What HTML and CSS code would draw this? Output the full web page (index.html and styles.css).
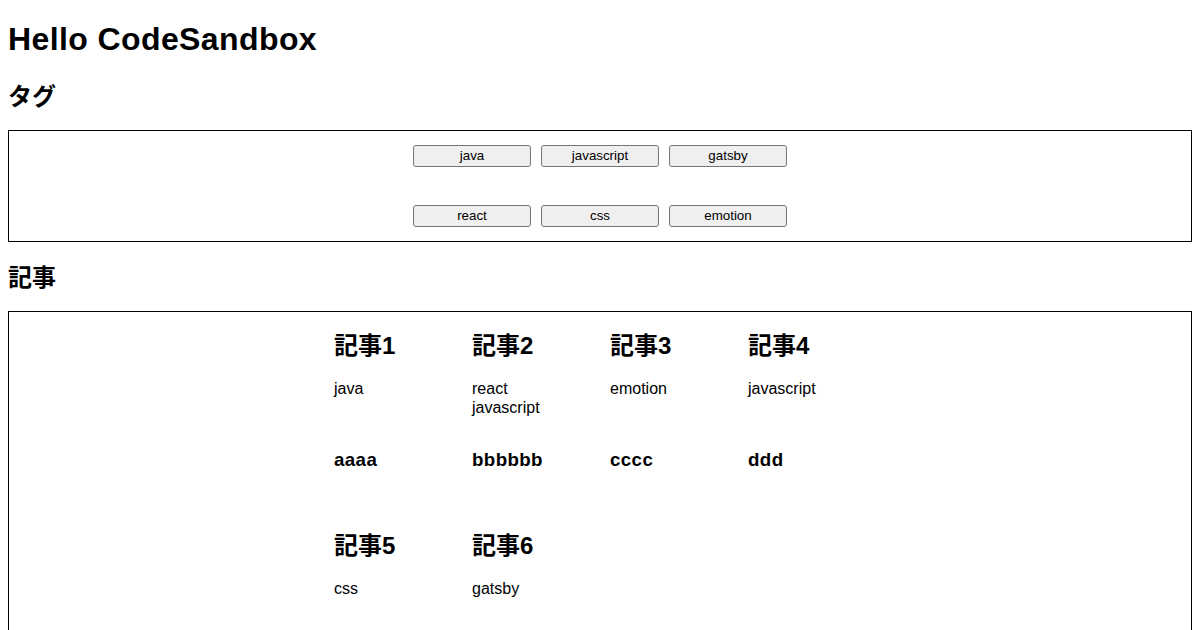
FILE: index.html
```html
<!DOCTYPE html>
<html lang="ja">
<head>
<meta charset="utf-8">
<title>Hello CodeSandbox</title>
<link rel="stylesheet" href="styles.css">
</head>
<body>
<h1 class="title">Hello CodeSandbox</h1>
<h2 class="section-title">タグ</h2>
<div class="tag-box">
  <button class="tag">java</button>
  <button class="tag">javascript</button>
  <button class="tag">gatsby</button>
  <button class="tag">react</button>
  <button class="tag">css</button>
  <button class="tag">emotion</button>
</div>
<h2 class="section-title">記事</h2>
<div class="post-box">
  <article class="post">
    <h2 class="post-title">記事1</h2>
    <div class="post-tags"><div>java</div></div>
    <h3 class="post-desc">aaaa</h3>
  </article>
  <article class="post">
    <h2 class="post-title">記事2</h2>
    <div class="post-tags"><div>react</div><div>javascript</div></div>
    <h3 class="post-desc">bbbbbb</h3>
  </article>
  <article class="post">
    <h2 class="post-title">記事3</h2>
    <div class="post-tags"><div>emotion</div></div>
    <h3 class="post-desc">cccc</h3>
  </article>
  <article class="post">
    <h2 class="post-title">記事4</h2>
    <div class="post-tags"><div>javascript</div></div>
    <h3 class="post-desc">ddd</h3>
  </article>
  <article class="post">
    <h2 class="post-title">記事5</h2>
    <div class="post-tags"><div>css</div></div>
  </article>
  <article class="post">
    <h2 class="post-title">記事6</h2>
    <div class="post-tags"><div>gatsby</div></div>
  </article>
</div>
</body>
</html>
```

FILE: styles.css
```css
html {
  margin: 0;
  padding: 0;
}

body {
  margin: 0 8px 8px;
  padding: 0;
  font-family: "Liberation Sans", "Noto Sans CJK JP", sans-serif;
  color: #000;
  background: #fff;
}

.title {
  font-size: 32px;
  line-height: 36.8px;
  font-weight: bold;
  letter-spacing: 0.4px;
  margin: 21.44px 0;
}

.section-title {
  font-size: 24px;
  line-height: 27.3px;
  padding-top: 3px;
  font-weight: bold;
  margin: 18.7px 0 20px;
}

.tag-box {
  border: 1px solid #000;
  display: grid;
  grid-template-columns: repeat(3, 118px);
  column-gap: 10px;
  row-gap: 38px;
  justify-content: center;
  padding: 14px 0;
}

.tag {
  height: 22px;
  padding: 0;
  border: 1px solid #767676;
  border-radius: 3px;
  background: #efefef;
  color: #000;
  font-family: "Liberation Sans", sans-serif;
  font-size: 13.33px;
  line-height: 15px;
}

.post-box {
  border: 1px solid #000;
  display: grid;
  grid-template-columns: repeat(4, 118px);
  grid-auto-rows: 1fr;
  column-gap: 20px;
  row-gap: 23px;
  justify-content: center;
  align-items: start;
}

.post-title {
  font-size: 24px;
  line-height: 30.3px;
  font-weight: bold;
  margin: 18.7px 0 17.6px;
}

.post-tags {
  min-height: 52px;
  font-size: 16px;
  line-height: 19px;
}

.post-desc {
  font-size: 18.72px;
  line-height: 21.5px;
  font-weight: bold;
  letter-spacing: 0.4px;
  margin: 18.72px 0;
}
```
